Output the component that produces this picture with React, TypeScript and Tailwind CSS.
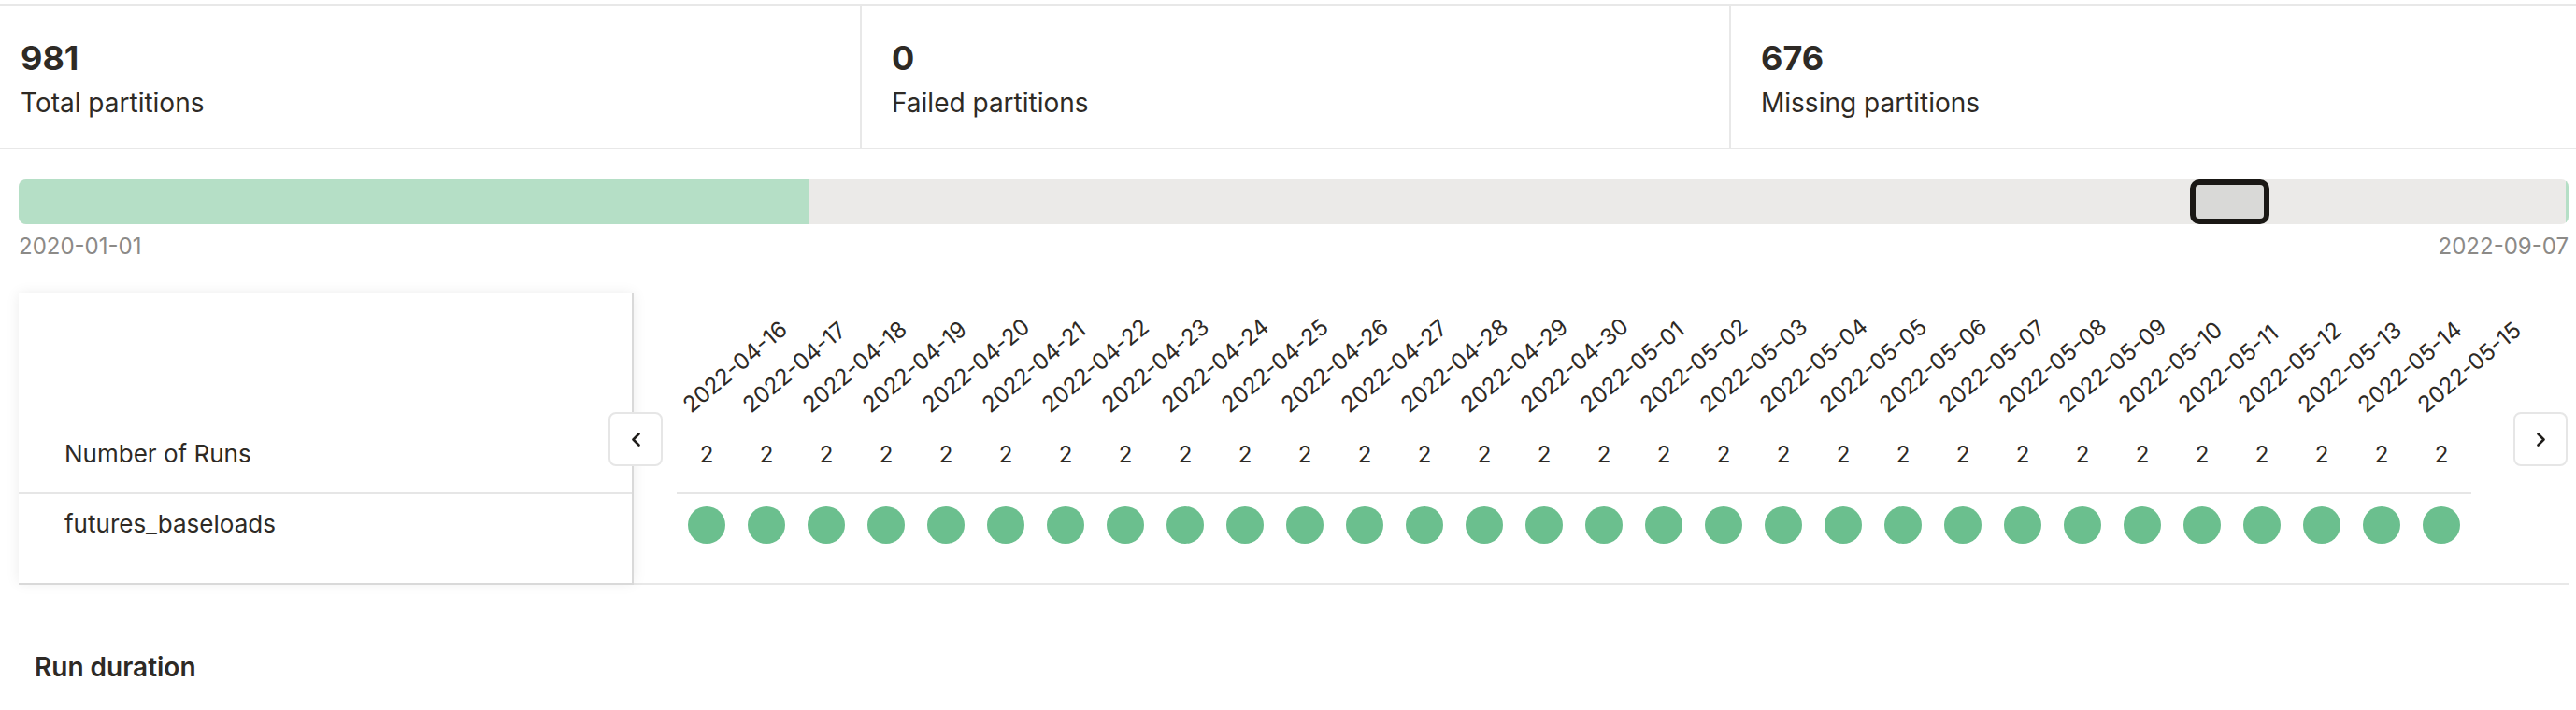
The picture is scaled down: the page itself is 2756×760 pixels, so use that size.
import React from 'react';

const stats = [
  { value: '981', label: 'Total partitions' },
  { value: '0', label: 'Failed partitions' },
  { value: '676', label: 'Missing partitions' },
];

const buildDates = () => {
  const out: string[] = [];
  const d = new Date(Date.UTC(2022, 3, 16));
  for (let i = 0; i < 30; i++) {
    out.push(d.toISOString().slice(0, 10));
    d.setUTCDate(d.getUTCDate() + 1);
  }
  return out;
};

const dates = buildDates();

const Chevron = ({ dir }: { dir: 'left' | 'right' }) => (
  <svg width="11" height="15" viewBox="0 0 11 15" fill="none">
    <polyline
      points={dir === 'left' ? '8.5,1.5 2.5,7.5 8.5,13.5' : '2.5,1.5 8.5,7.5 2.5,13.5'}
      stroke="#1f1d1a"
      strokeWidth="2.6"
      strokeLinecap="round"
      strokeLinejoin="round"
    />
  </svg>
);

const NavButton = ({ dir, className }: { dir: 'left' | 'right'; className: string }) => (
  <button
    className={`absolute top-[127px] z-20 flex h-[58px] w-[58px] items-center justify-center rounded-[8px] border-2 border-[#e6e6e6] bg-white ${className}`}
  >
    <Chevron dir={dir} />
  </button>
);

const App = () => {
  return (
    <div className="min-h-screen bg-white font-['Inter','Noto_Sans',sans-serif] text-[#2e2a25]">
      {/* summary */}
      <div className="mt-[4px] flex border-y-2 border-[#e8e8e8]">
        {stats.map((s, i) => (
          <div
            key={s.label}
            className={
              i === 0
                ? 'w-[920px] pl-[22px] pt-[34px] pb-[30px] flex flex-col gap-[8px]'
                : i === 1
                ? 'w-[930px] border-l-2 border-[#e8e8e8] pl-[32px] pt-[34px] pb-[30px] flex flex-col gap-[8px]'
                : 'flex-1 border-l-2 border-[#e8e8e8] pl-[32px] pt-[34px] pb-[30px] flex flex-col gap-[8px]'
            }
          >
            <span className="text-[36px] leading-[44px] font-bold">{s.value}</span>
            <span className="text-[28px] leading-[36px]">{s.label}</span>
          </div>
        ))}
      </div>

      <div className="pl-[20px] pr-[8px]">
        {/* range bar */}
        <div className="relative mt-[32px] flex h-[48px] overflow-hidden rounded-[8px] bg-[#ebeae8]">
          <div className="h-full w-[845px] bg-[#b5dfc6]" />
          <div className="flex-1" />
          <div className="h-full w-[3px] bg-[#b5dfc6]" />
          <div className="absolute left-[2323px] top-0 h-[48px] w-[85px] rounded-[10px] border-[6px] border-[#1a1815] bg-[#d9d9d7]" />
        </div>
        <div className="mt-[8px] flex justify-between text-[24px] leading-[32px] text-[#8c8a87]">
          <span>2020-01-01</span>
          <span>2022-09-07</span>
        </div>

        {/* partition grid */}
        <div className="relative mt-[34px] flex border-b-2 border-[#e8e8e8]">
          <div className="relative z-10 w-[658px] border-r-2 border-[#d9d9d9] bg-white shadow-[0_2px_0_#d9d9d9,0_0_14px_rgba(0,0,0,0.08)]">
            <div className="flex h-[215px] items-end border-b-2 border-[#e6e6e6] pl-[49px] pb-[25px]">
              <span className="text-[26px] leading-[32px]">Number of Runs</span>
            </div>
            <div className="h-[95px] pl-[49px] pt-[16px]">
              <span className="text-[26px] leading-[32px]">futures_baseloads</span>
            </div>
          </div>

          <div className="ml-[46px] flex flex-col">
            <div className="flex h-[215px] border-b-2 border-[#e6e6e6]">
              {dates.map((d) => (
                <div key={d} className="relative flex w-[64px] flex-col items-center justify-end pb-[24px]">
                  <span className="absolute left-[18px] top-[108px] origin-bottom-left -rotate-[40deg] whitespace-nowrap text-[24px] leading-[24px]">
                    {d}
                  </span>
                  <span className="text-[24px] leading-[32px]">2</span>
                </div>
              ))}
            </div>
            <div className="flex h-[95px]">
              {dates.map((d) => (
                <div key={d} className="flex w-[64px] justify-center pt-[13px]">
                  <div className="h-[40px] w-[40px] rounded-full bg-[#6bbf8e]" />
                </div>
              ))}
            </div>
          </div>

          <NavButton dir="left" className="left-[631px]" />
          <NavButton dir="right" className="left-[2669px]" />
        </div>

        <div className="mt-[70px] pl-[17px] text-[28px] leading-[36px] font-semibold">Run duration</div>
      </div>
    </div>
  );
};

export default App;
